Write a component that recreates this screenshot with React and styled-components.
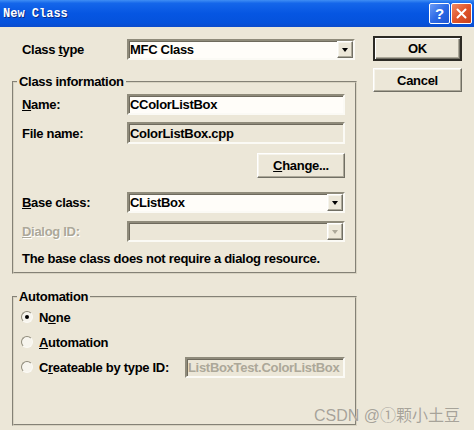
import React from 'react';
import styled, { createGlobalStyle, css } from 'styled-components';

const GlobalStyle = createGlobalStyle`
    html, body {
        margin: 0;
        padding: 0;
        background: #ece7d8;
    }
    body {
        font-family: "Liberation Sans", Arial, sans-serif;
        font-size: 13px;
        font-weight: bold;
        letter-spacing: -0.3px;
        color: #000;
    }
`;

const Window = styled.div`
    position: relative;
    width: 474px;
    height: 430px;
    overflow: hidden;
    display: flex;
    flex-direction: column;
    background: #ece7d8;
`;

const TitleBar = styled.div`
    height: 27px;
    flex: none;
    display: flex;
    align-items: center;
    justify-content: space-between;
    padding: 0 2px 0 3px;
    background: linear-gradient(#3f8ef4 0%, #1466ea 12%, #0656e2 50%, #0552dc 85%, #0b4ccc 100%);
`;

const Title = styled.span`
    font-family: "Liberation Mono", "Courier New", monospace;
    font-size: 12px;
    letter-spacing: 0;
    color: #fff;
    text-shadow: 1px 1px 0 #0a2c86;
`;

const Caption = styled.div`
    display: flex;
    gap: 1px;
`;

const CaptionButton = styled.div`
    width: 21px;
    height: 21px;
    box-sizing: border-box;
    border: 1px solid #fff;
    border-radius: 2px;
    display: flex;
    align-items: center;
    justify-content: center;
    color: #fff;
    font-size: 15px;
    letter-spacing: 0;
    background: ${p => p.$close
        ? 'linear-gradient(135deg, #f08a64 0%, #e0542a 50%, #c8401c 100%)'
        : 'linear-gradient(135deg, #6c9cf6 0%, #2d6ae6 50%, #1f55d2 100%)'};
`;

const Body = styled.div`
    display: grid;
    grid-template-columns: 345px 89px;
    column-gap: 16px;
    align-items: start;
    padding: 9px 0 0 12px;
`;

const LeftColumn = styled.div`
    display: flex;
    flex-direction: column;
`;

const RightColumn = styled.div`
    display: flex;
    flex-direction: column;
    gap: 7px;
`;

const TypeRow = styled.div`
    display: grid;
    grid-template-columns: 105px 228px;
    align-items: center;
    height: 21px;
    margin-top: 3px;
    padding-left: 10px;
`;

const Group = styled.fieldset`
    margin: ${p => p.$top}px 0 0 0;
    padding: 0;
    border: 2px groove #d8d3c2;
    min-width: 0;
`;

const Legend = styled.legend`
    margin-left: 3px;
    padding: 0 2px;
    line-height: 14px;
    height: 14px;
`;

const GroupInner = styled.div`
    display: flex;
    flex-direction: column;
    padding: ${p => p.$pad};
`;

const FieldRow = styled.div`
    display: grid;
    grid-template-columns: 105px 218px;
    align-items: center;
    height: ${p => p.$h || 21}px;
    margin-top: ${p => p.$top}px;
`;

const Label = styled.span`
    white-space: nowrap;
    ${p => p.$disabled && css`
        color: #aca899;
        text-shadow: 1px 1px 0 #fff;
    `}
`;

const sunken = css`
    box-sizing: border-box;
    border: 2px solid;
    border-color: #8f8b7b #fbfaf5 #fbfaf5 #8f8b7b;
    box-shadow: inset 1px 1px 0 #6e6a5d;
`;

const TextBox = styled.div`
    ${sunken};
    height: ${p => p.$h || 21}px;
    width: ${p => p.$w ? `${p.$w}px` : 'auto'};
    display: flex;
    align-items: center;
    padding-left: 1px;
    white-space: nowrap;
    overflow: hidden;
    background: ${p => p.$readonly ? '#ece7d8' : '#fffdf9'};
    color: ${p => p.$disabled ? '#aca899' : '#000'};
`;

const Combo = styled.div`
    ${sunken};
    height: 21px;
    display: flex;
    align-items: stretch;
    background: ${p => p.$disabled ? '#ece7d8' : '#fffdf9'};
`;

const ComboText = styled.span`
    flex: 1;
    display: flex;
    align-items: center;
    padding-left: 1px;
`;

const raised = css`
    box-sizing: border-box;
    border: 1px solid;
    border-color: #fff #716f64 #716f64 #fff;
    box-shadow: inset -1px -1px 0 #aca899, inset 1px 1px 0 #f6f4ec;
    background: #ece7d8;
`;

const ArrowButton = styled.div`
    ${raised};
    width: 16px;
    display: flex;
    align-items: center;
    justify-content: center;
`;

const Arrow = styled.span`
    width: 0;
    height: 0;
    border-left: 3.5px solid transparent;
    border-right: 3.5px solid transparent;
    border-top: 4px solid ${p => p.$disabled ? '#aca899' : '#000'};
`;

const Button = styled.div`
    ${raised};
    width: ${p => p.$w || 89}px;
    height: ${p => p.$h || 25}px;
    display: flex;
    align-items: center;
    justify-content: center;
    ${p => p.$default && css`
        border: 2px solid;
        border-color: #2c2a24;
        box-shadow: inset 1px 1px 0 #fff, inset -1px -1px 0 #716f64, inset -2px -2px 0 #aca899;
    `}
`;

const ButtonRow = styled.div`
    display: flex;
    justify-content: flex-end;
    margin-top: ${p => p.$top}px;
`;

const Note = styled.div`
    height: 16px;
    line-height: 16px;
    margin-top: 9px;
    white-space: nowrap;
`;

const RadioRow = styled.label`
    display: flex;
    align-items: center;
    height: 20px;
    margin-top: ${p => p.$top}px;
    white-space: nowrap;
`;

const RadioDot = styled.span`
    width: 12px;
    height: 12px;
    flex: none;
    box-sizing: border-box;
    border-radius: 50%;
    border: 1px solid;
    border-color: #8f8b7b #fbfaf5 #fbfaf5 #8f8b7b;
    background: #f7f5ee;
    margin-right: 6px;
    display: flex;
    align-items: center;
    justify-content: center;
    &::after {
        content: '';
        width: 4px;
        height: 4px;
        border-radius: 50%;
        background: ${p => p.$checked ? '#000' : 'transparent'};
    }
`;

const Spacer = styled.span`
    width: ${p => p.$w}px;
    flex: none;
`;

const Watermark = styled.div`
    position: absolute;
    right: 14px;
    top: 402px;
    font-family: "Liberation Sans", "Noto Sans CJK SC", sans-serif;
    font-weight: normal;
    font-size: 16px;
    letter-spacing: 0;
    color: #a7a399;
    text-shadow: 0 0 1px #f4f1e8;
`;

function ComboBox({ value, disabled }) {
    return (
        <Combo $disabled={disabled}>
            <ComboText>{value}</ComboText>
            <ArrowButton><Arrow $disabled={disabled} /></ArrowButton>
        </Combo>
    );
}

export default function App() {
    return (
        <Window>
            <GlobalStyle />
            <TitleBar>
                <Title>New Class</Title>
                <Caption>
                    <CaptionButton>?</CaptionButton>
                    <CaptionButton $close>
                        <svg width="11" height="11" viewBox="0 0 11 11">
                            <path d="M1.5 1.5 L9.5 9.5 M9.5 1.5 L1.5 9.5" stroke="#fff" strokeWidth="2" strokeLinecap="round" />
                        </svg>
                    </CaptionButton>
                </Caption>
            </TitleBar>

            <Body>
                <LeftColumn>
                    <TypeRow>
                        <Label>Class <u>t</u>ype</Label>
                        <ComboBox value='MFC Class' />
                    </TypeRow>

                    <Group $top={15}>
                        <Legend>Class information</Legend>
                        <GroupInner $pad='0 10px 5px 8px'>
                            <FieldRow $top={5}>
                                <Label><u>N</u>ame:</Label>
                                <TextBox>CColorListBox</TextBox>
                            </FieldRow>
                            <FieldRow $top={7} $h={22}>
                                <Label>File name:</Label>
                                <TextBox $readonly $h={22}>ColorListBox.cpp</TextBox>
                            </FieldRow>
                            <ButtonRow $top={9}>
                                <Button $w={88}><span><u>C</u>hange...</span></Button>
                            </ButtonRow>
                            <FieldRow $top={14} $h={20}>
                                <Label><u>B</u>ase class:</Label>
                                <ComboBox value='CListBox' />
                            </FieldRow>
                            <FieldRow $top={9}>
                                <Label $disabled><u>D</u>ialog ID:</Label>
                                <ComboBox value='' disabled />
                            </FieldRow>
                            <Note>The base class does not require a dialog resource.</Note>
                        </GroupInner>
                    </Group>

                    <Group $top={16}>
                        <Legend>Automation</Legend>
                        <GroupInner $pad='3px 10px 47px 7px'>
                            <RadioRow $top={0}>
                                <RadioDot $checked />
                                <span>N<u>o</u>ne</span>
                            </RadioRow>
                            <RadioRow $top={5}>
                                <RadioDot />
                                <span><u>A</u>utomation</span>
                            </RadioRow>
                            <RadioRow $top={5}>
                                <RadioDot />
                                <span>C<u>r</u>eateable by type ID:</span>
                                <Spacer $w={16} />
                                <TextBox $readonly $disabled $w={162} $h={21}>ListBoxTest.ColorListBox</TextBox>
                            </RadioRow>
                        </GroupInner>
                    </Group>
                </LeftColumn>

                <RightColumn>
                    <Button $default>OK</Button>
                    <Button $h={24}>Cancel</Button>
                </RightColumn>
            </Body>

            <Watermark>CSDN @①颗小土豆</Watermark>
        </Window>
    );
}
